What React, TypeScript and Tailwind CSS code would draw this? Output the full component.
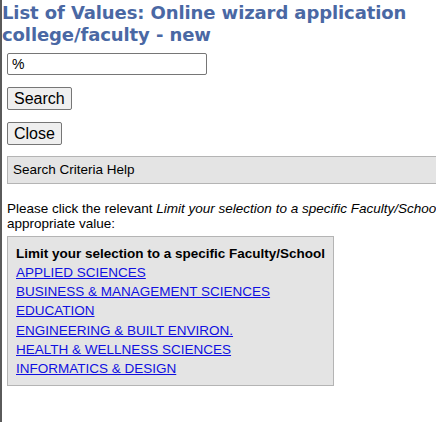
import { useState } from 'react'

const FACULTIES = [
  'APPLIED SCIENCES',
  'BUSINESS & MANAGEMENT SCIENCES',
  'EDUCATION',
  'ENGINEERING & BUILT ENVIRON.',
  'HEALTH & WELLNESS SCIENCES',
  'INFORMATICS & DESIGN',
]

export default function App() {
  const [query, setQuery] = useState('%')

  return (
    <div className="min-h-screen overflow-hidden border-l-2 border-[#5a5a5a] bg-white font-['Liberation_Sans',Arial,sans-serif] text-black">
      <h1 className="pt-[2px] font-['DejaVu_Sans',Verdana,sans-serif] text-[18px] font-bold leading-[22px] tracking-[-0.1px] text-[#4a68a4]">
        List of Values: Online wizard application college/faculty - new
      </h1>

      <div className="flex flex-col items-start gap-3 px-[5px] pt-[7px]">
        <input
          value={query}
          onChange={(e) => setQuery(e.target.value)}
          className="h-[22px] w-[200px] rounded-[2px] border border-[#767676] px-[4px] text-[14px] outline-none"
        />
        <button className="h-[23px] rounded-[2px] border border-[#767676] bg-[#efefef] px-[6px] text-[16px] leading-none">
          Search
        </button>
        <button className="h-[23px] rounded-[2px] border border-[#767676] bg-[#efefef] px-[6px] text-[16px] leading-none">
          Close
        </button>
      </div>

      <div className="ml-[5px] mt-[11px] w-[700px] border border-[#b4b4b4] bg-[#e4e4e4] px-[5px] py-[5px] text-[13.5px] leading-[16px]">
        Search Criteria Help
      </div>

      <p className="ml-[5px] mt-[17px] w-[565px] text-[13.5px] leading-[15px]">
        Please click the relevant <i>Limit your selection to a specific Faculty/School</i> link to select the
        appropriate value:
      </p>

      <div className="ml-[5px] mt-[5px] inline-block border border-[#b4b4b4] bg-[#e4e4e4] pb-[7px] pl-[8px] pr-[8px] pt-[8px] text-[13.5px]">
        <div className="font-bold leading-[18px]">Limit your selection to a specific Faculty/School</div>
        <ul className="flex flex-col">
          {FACULTIES.map((f) => (
            <li key={f} className="leading-[19.2px]">
              <a href="#" className="text-[#1010e0] underline">
                {f}
              </a>
            </li>
          ))}
        </ul>
      </div>
    </div>
  )
}
